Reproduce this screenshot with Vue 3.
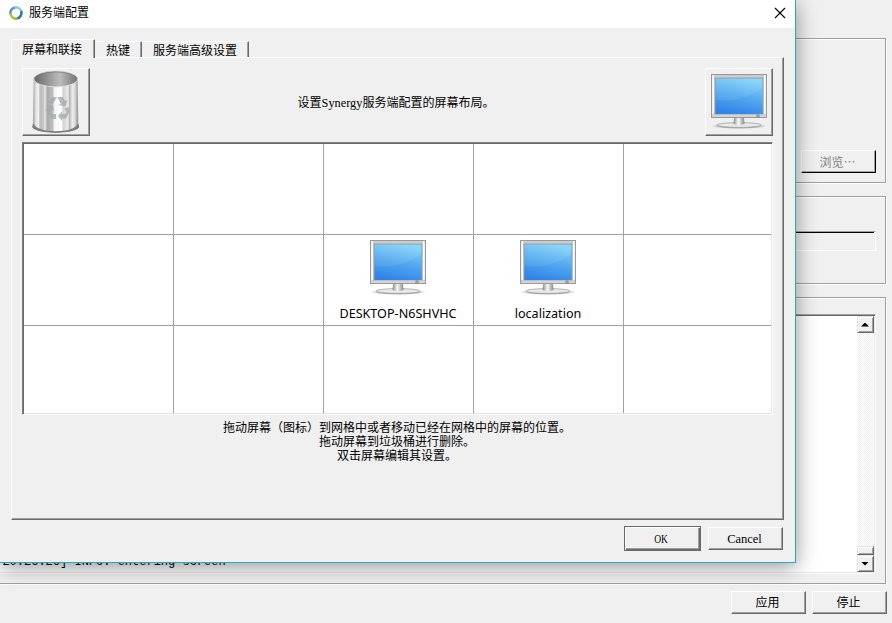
<template>
  <div class="desktop">
    <!-- Main window behind the dialog -->
    <div class="main-window">
      <div class="group group-client">
        <button class="btn browse" disabled>浏览…</button>
      </div>
      <div class="group group-server">
        <div class="line-edit"></div>
      </div>
      <div class="group group-log">
        <div class="log">
          <div class="log-text">[2016-10-09T20:26:26] INFO: entering screen</div>
          <div class="scrollbar">
            <button class="scroll-btn"><i class="arrow up"></i></button>
            <div class="track"></div>
            <div class="thumb"></div>
            <button class="scroll-btn"><i class="arrow down"></i></button>
          </div>
        </div>
      </div>
      <div class="main-buttons">
        <button class="btn">应用</button>
        <button class="btn">停止</button>
      </div>
    </div>

    <svg class="defs" width="0" height="0">
      <defs>
        <linearGradient id="screenFill" x1="0.3" y1="1" x2="0.6" y2="0">
          <stop offset="0" stop-color="#2f82e8" />
          <stop offset="0.5" stop-color="#50a7ee" />
          <stop offset="1" stop-color="#80d2fa" />
        </linearGradient>
        <linearGradient id="bezel" x1="0" y1="0" x2="0" y2="1">
          <stop offset="0" stop-color="#c4c4c4" />
          <stop offset="0.15" stop-color="#e2e2e2" />
          <stop offset="0.85" stop-color="#e0e0e0" />
          <stop offset="1" stop-color="#b5b5b5" />
        </linearGradient>
        <linearGradient id="neck" x1="0" y1="0" x2="1" y2="0">
          <stop offset="0" stop-color="#8a8a8a" />
          <stop offset="0.45" stop-color="#fafafa" />
          <stop offset="1" stop-color="#888" />
        </linearGradient>
        <radialGradient id="shade">
          <stop offset="0" stop-color="#444" stop-opacity="0.75" />
          <stop offset="0.7" stop-color="#666" stop-opacity="0.5" />
          <stop offset="1" stop-color="#999" stop-opacity="0" />
        </radialGradient>
        <linearGradient id="metal" x1="0" y1="0" x2="1" y2="0">
          <stop offset="0" stop-color="#999" />
          <stop offset="0.06" stop-color="#e0e0e0" />
          <stop offset="0.13" stop-color="#f4f4f4" />
          <stop offset="0.15" stop-color="#bbb" />
          <stop offset="0.24" stop-color="#c6c6c6" />
          <stop offset="0.26" stop-color="#eee" />
          <stop offset="0.31" stop-color="#a9a9a9" />
          <stop offset="0.44" stop-color="#c0c0c0" />
          <stop offset="0.47" stop-color="#f4f4f4" />
          <stop offset="0.63" stop-color="#fff" />
          <stop offset="0.66" stop-color="#d2d2d2" />
          <stop offset="0.78" stop-color="#e9e9e9" />
          <stop offset="0.8" stop-color="#b2b2b2" />
          <stop offset="0.87" stop-color="#ececec" />
          <stop offset="0.93" stop-color="#d8d8d8" />
          <stop offset="1" stop-color="#888" />
        </linearGradient>
        <linearGradient id="hole" x1="0" y1="0" x2="1" y2="0">
          <stop offset="0" stop-color="#666" />
          <stop offset="0.35" stop-color="#999" />
          <stop offset="0.6" stop-color="#bcbcbc" />
          <stop offset="1" stop-color="#707070" />
        </linearGradient>
        <symbol id="monitor" viewBox="0 0 56 56">
          <ellipse cx="28" cy="52" rx="28" ry="3" fill="url(#shade)" />
          <ellipse cx="28" cy="51" rx="22" ry="2.4" fill="#e9e9e9" stroke="#999" stroke-width="0.7" />
          <path d="M23 44h10l.5 6q-5.500 2-11 0z" fill="url(#neck)" />
          <rect x="0.5" y="0.5" width="55" height="43" fill="url(#bezel)" stroke="#999" />
          <path d="M2.200 1v39M53.800 1v39" stroke="#fff" stroke-width="1.400" />
          <rect x="3.500" y="3.500" width="49" height="37" fill="#8f9ba3" />
          <rect x="4.500" y="4.500" width="47" height="35.500" fill="url(#screenFill)" />
          <path d="M4.500 26q27 3 47-12v-9.500h-47z" fill="#fff" opacity="0.08" />
          <rect x="1" y="40.600" width="54" height="2.400" fill="#d4d4d4" />
          <circle cx="47" cy="42" r="1.300" fill="#bbb" stroke="#777" stroke-width="0.7" />
        </symbol>
      </defs>
    </svg>

    <!-- Server configuration dialog -->
    <div class="dialog">
      <div class="title-bar">
        <svg class="logo" width="16" height="16" viewBox="0 0 16 16" fill="none" stroke-width="2.600">
          <path d="M2.400 9A5.600 5.600 0 0 1 7 2.500" stroke="#5b8fd6" />
          <path d="M6.500 2.600A5.600 5.600 0 0 1 13.300 6.500" stroke="#8ecbe6" />
          <path d="M13.200 6A5.600 5.600 0 0 1 9 13.500" stroke="#2b7a96" />
          <path d="M9.500 13.400A5.600 5.600 0 0 1 2.400 8.500" stroke="#a9c43c" />
        </svg>
        <span class="title">服务端配置</span>
        <svg class="close" width="12" height="12" viewBox="0 0 12 12">
          <path d="M1 1l10 10M11 1L1 11" stroke="#000" stroke-width="1.100" />
        </svg>
      </div>

      <div class="tabs">
        <div v-for="(tab, i) in tabs" :key="tab" class="tab" :class="{ active: i === activeTab }" @click="activeTab = i">
          {{ tab }}
        </div>
      </div>

      <div class="panel">
        <div class="tool-row">
          <div class="icon-box">
            <svg width="48" height="64" viewBox="0 0 48 64">
              <ellipse cx="23.700" cy="56.500" rx="23.500" ry="6.300" fill="#777" />
              <path d="M1.700 9L1 55Q5 62 23.700 62T46.300 55L45.600 9z" fill="url(#metal)" />
              <path d="M1 54Q5 61.800 23.700 61.800T46.300 54" fill="none" stroke="#777" stroke-width="1.200" />
              <ellipse cx="23.700" cy="9" rx="21.800" ry="7.900" fill="url(#hole)" stroke="#ddd" stroke-width="1" />
              <path d="M2 9A21.800 7.900 0 0 1 45.400 9" fill="none" stroke="#777" stroke-width="0.8" />
              <g fill="#a5abad" opacity="0.8">
                <path d="M17.500 30.500l3.500-3.500h4l-3 5-1.500 2.500-5-2z" />
                <path d="M25.500 27h5l3 4 2-1-2 6.500-7-1.500 2.300-1.300z" />
                <path d="M14.500 36l6-1 2 6-2-1-3 5-4-5 2-3z" />
                <path d="M16 43.500l8 .5v5h-5z" />
                <path d="M32.500 38.500l4-1.500 1 5-3.500 6.500h-4v2.500l-4-5 4-4.500v2.500h3.500l1-2z" />
              </g>
            </svg>
          </div>
          <div class="hint">设置<span class="latin">Synergy</span>服务端配置的屏幕布局。</div>
          <div class="icon-box">
            <svg width="56" height="56"><use href="#monitor" /></svg>
          </div>
        </div>

        <div class="grid">
          <div v-for="(name, i) in cells" :key="i" class="cell">
            <template v-if="name">
              <svg width="56" height="56"><use href="#monitor" /></svg>
              <span>{{ name }}</span>
            </template>
          </div>
        </div>

        <div class="help">
          <div>拖动屏幕（图标）到网格中或者移动已经在网格中的屏幕的位置。</div>
          <div>拖动屏幕到垃圾桶进行删除。</div>
          <div>双击屏幕编辑其设置。</div>
        </div>
      </div>

      <div class="dialog-buttons">
        <button class="btn default"><span class="ok">OK</span></button>
        <button class="btn"><span class="cancel">Cancel</span></button>
      </div>
    </div>
  </div>
</template>

<script setup>
import { ref } from 'vue';

const tabs = ['屏幕和联接', '热键', '服务端高级设置'];
const activeTab = ref(0);

// 5 x 3 Raster
const cells = ref(Array(15).fill(''));
cells.value[7] = 'DESKTOP-N6SHVHC';
cells.value[8] = 'localization';
</script>

<style>
body {
  margin: 0;
  overflow: hidden;
}
</style>

<style scoped>
.desktop {
  position: relative;
  width: 892px;
  height: 623px;
  overflow: hidden;
  background: #f0f0f0;
  color: #000;
  font-family: 'Liberation Sans', 'Noto Sans CJK SC', sans-serif;
  font-size: 12px;
  line-height: 14px;
}

.desktop * {
  box-sizing: border-box;
}

.defs {
  position: absolute;
}

.main-window {
  display: flex;
  flex-direction: column;
  height: 623px;
  padding: 38px 5px 0 0;
}

.group {
  display: flex;
  justify-content: flex-end;
  margin-left: -4px;
  border: 1px solid #a0a0a0;
  box-shadow: 1px 1px 0 #fff, inset 1px 1px 0 #fff;
  margin-right: 1px;
}

.group-client {
  height: 145px;
  padding: 111px 9px 0 0;
}

.group-server {
  height: 88px;
  margin-top: 13px;
  padding: 34px 9px 0 0;
}

.group-log {
  height: 287px;
  margin-top: 13px;
  padding: 16px 9px 0 0;
}

.line-edit {
  width: 880px;
  height: 20px;
  border: 1px solid;
  border-color: #a0a0a0 #fff #fff #a0a0a0;
  box-shadow: inset -1px 0 0 #f0f0f0, inset 0 1px 0 #000;
}

.log {
  display: flex;
  justify-content: space-between;
  width: 880px;
  height: 260px;
  background: #fff;
  border: 1px solid;
  border-color: #a0a0a0 #fff #fff #a0a0a0;
  box-shadow: inset 0 1px 0 #696969, inset -1px -1px 0 #e8e8e8;
  padding: 1px 1px 1px 0;
}

.log-text {
  align-self: flex-end;
  margin: 0 0 3px -82px;
  font-family: 'Liberation Mono', monospace;
  font-size: 12px;
  white-space: nowrap;
}

.scrollbar {
  display: flex;
  flex-direction: column;
  width: 17px;
}

.scroll-btn,
.thumb {
  flex: none;
  width: 17px;
  height: 17px;
  padding: 0;
  background: #f0f0f0;
  border: 1px solid;
  border-color: #e3e3e3 #696969 #696969 #e3e3e3;
  box-shadow: inset 1px 1px 0 #fff, inset -1px -1px 0 #a0a0a0;
}

.scroll-btn {
  display: flex;
  align-items: center;
  justify-content: center;
}

.thumb {
  height: 9px;
}

.track {
  flex: 1;
  background: repeating-conic-gradient(#fff 0 25%, #f0f0f0 0 50%) 0 0 / 2px 2px;
}

.arrow {
  width: 8px;
  height: 4px;
  margin-right: 1px;
  background: #000;
}

.up {
  clip-path: polygon(50% 0, 100% 100%, 0 100%);
}

.down {
  clip-path: polygon(0 0, 100% 0, 50% 100%);
}

.main-buttons {
  display: flex;
  justify-content: flex-end;
  gap: 6px;
  margin-top: 7px;
}

.btn {
  width: 75px;
  height: 23px;
  padding: 0 2px 0 0;
  background: #f0f0f0;
  border: 1px solid;
  border-color: #fff #696969 #696969 #fff;
  box-shadow: inset -1px -1px 0 #a0a0a0;
  color: #000;
  font: inherit;
}

.browse {
  border-color: #fff #000 #000 #fff;
  color: #808080;
  font-family: 'Noto Sans CJK SC', sans-serif;
}

.dialog {
  position: absolute;
  left: 0;
  top: 0;
  display: flex;
  flex-direction: column;
  width: 796px;
  height: 563px;
  background: #f0f0f0;
  border-right: 1px solid #23aabb;
  border-bottom: 1px solid #17b1c4;
  box-shadow: 0 4px 20px rgba(0, 0, 0, 0.42);
}

.title-bar {
  display: flex;
  align-items: center;
  height: 28px;
  padding: 0 9px 3px 8px;
  background: #fff;
}

.logo {
  margin-right: 5px;
}

.close {
  margin-left: auto;
}

.tabs {
  display: flex;
  align-items: flex-end;
  height: 29px;
  padding-left: 11px;
}

.tab {
  height: 16px;
  padding: 2px 11px 0 10px;
  line-height: 14px;
  border-top: 1px solid #fff;
  border-right: 1px solid #696969;
  border-left: 1px solid transparent;
  border-radius: 2px 1px 0 0;
  box-shadow: inset -1px 0 0 #a0a0a0;
}

.tab.active {
  position: relative;
  height: 19px;
  margin-bottom: -1px;
  padding: 3px 12px 0 10px;
  border-left-color: #fff;
  background: #f0f0f0;
}

.panel {
  width: 773px;
  height: 463px;
  margin-left: 11px;
  padding: 10px;
  border: 1px solid;
  border-color: #fff #696969 #696969 #fff;
  box-shadow: inset -1px -1px 0 #a0a0a0;
}

.tool-row {
  display: flex;
  align-items: center;
  justify-content: space-between;
}

.icon-box {
  display: flex;
  align-items: center;
  justify-content: center;
  width: 68px;
  height: 68px;
  border: 1px solid;
  border-color: #fff #696969 #696969 #fff;
  box-shadow: inset -1px -1px 0 #a0a0a0;
}

.hint {
  margin: 1px 0 0 -3px;
}

.latin {
  font-family: 'Liberation Serif', serif;
  font-size: 12.3px;
}

.grid {
  display: grid;
  grid-template-columns: repeat(4, 150px) 147px;
  grid-template-rows: 91px 91px 87px;
  width: 751px;
  height: 273px;
  margin-top: 6px;
  background: #fff;
  border: 1px solid;
  border-color: #808080 #fff #fff #808080;
  box-shadow: inset 1px 1px 0 #696969, inset -1px -1px 0 #e3e3e3;
  padding: 1px;
}

.cell {
  display: flex;
  flex-direction: column;
  align-items: center;
  padding: 5px 1px 0 0;
  border-right: 1px solid #a0a0a0;
  border-bottom: 1px solid #a0a0a0;
  font-family: 'Noto Sans', sans-serif;
  font-size: 12.6px;
}

.cell:nth-child(5n) {
  border-right: none;
}

.cell:nth-child(n + 11) {
  border-bottom: none;
}

.cell span {
  margin-top: 11px;
  line-height: 14px;
}

.help {
  margin-top: 6px;
  padding-right: 1px;
  text-align: center;
}

.dialog-buttons {
  display: flex;
  align-items: center;
  justify-content: flex-end;
  gap: 7px;
  margin-top: 6px;
  padding-right: 12px;
}

.default {
  width: 77px;
  height: 25px;
  border-color: #696969;
  box-shadow: inset 1px 1px 0 #fff, inset -1px -1px 0 #696969, inset -2px -2px 0 #a0a0a0;
}

.ok,
.cancel {
  display: inline-block;
  font-family: 'Liberation Serif', serif;
  font-size: 12.5px;
}

.ok {
  transform: scaleX(0.76);
}
</style>
